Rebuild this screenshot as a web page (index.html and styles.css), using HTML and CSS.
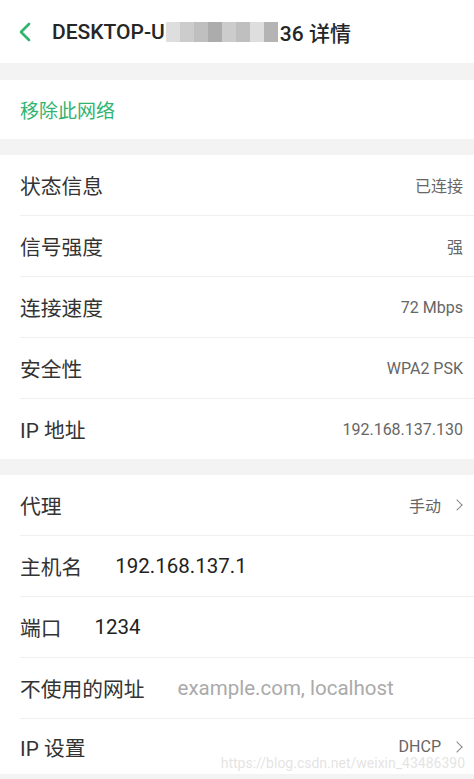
FILE: index.html
```html
<!DOCTYPE html>
<html lang="zh-CN">
<head>
  <meta charset="UTF-8" />
  <meta name="viewport" content="width=device-width, initial-scale=1.0" />
  <title>网络详情</title>
  <link rel="stylesheet" href="styles.css">
</head>
<body>

  <header class="topbar">
    <svg class="back" width="14" height="20" viewBox="0 0 14 20">
      <path d="M11 2 L3 10 L11 18" fill="none" stroke="#2fb46e" stroke-width="2.6" stroke-linecap="round" stroke-linejoin="round"/>
    </svg>
    <h1 class="title">DESKTOP-U<span class="mosaic"><i class="m1"></i><i class="m2"></i><i class="m3"></i><i class="m4"></i><i class="m2"></i><i class="m3"></i><i class="m1"></i><i class="m5"></i></span>36 详情</h1>
  </header>

  <div class="gap"></div>

  <section class="group">
    <div class="row action">移除此网络</div>
  </section>

  <div class="gap"></div>

  <section class="group">
    <div class="row"><span class="label">状态信息</span><span class="value">已连接</span></div>
    <div class="row"><span class="label">信号强度</span><span class="value">强</span></div>
    <div class="row"><span class="label">连接速度</span><span class="value">72 Mbps</span></div>
    <div class="row"><span class="label">安全性</span><span class="value">WPA2 PSK</span></div>
    <div class="row"><span class="label">IP 地址</span><span class="value">192.168.137.130</span></div>
  </section>

  <div class="gap"></div>

  <section class="group">
    <div class="row"><span class="label">代理</span><span class="value">手动<span class="arrow"></span></span></div>
    <div class="row"><span class="label">主机名</span><span class="field">192.168.137.1</span></div>
    <div class="row"><span class="label">端口</span><span class="field">1234</span></div>
    <div class="row"><span class="label">不使用的网址</span><span class="field hint">example.com, localhost</span></div>
    <div class="row last"><span class="label">IP 设置</span><span class="value">DHCP<span class="arrow"></span></span></div>
  </section>

  <div class="watermark">https://blog.csdn.net/weixin_43486390</div>

</body>
</html>
```

FILE: styles.css
```css
body {
  margin: 0;
  background-color: #f3f3f3;
  font-family: Roboto, "Noto Sans CJK SC", sans-serif;
  color: #333;
  position: relative;
  height: 779px;
  overflow: hidden;
}
.topbar {
  height: 63px;
  background-color: #fff;
  display: flex;
  align-items: center;
  padding-left: 18px;
}
.back {
  display: block;
  margin-right: 20px;
}
.title {
  margin: 0;
  font-size: 21px;
  font-weight: 500;
  color: #262626;
  display: flex;
  align-items: center;
}
.mosaic {
  display: inline-flex;
  height: 20px;
  margin: 0 2px 0 1px;
  opacity: 0.85;
}
.mosaic i {
  display: block;
  width: 14px;
  height: 20px;
}
.mosaic .m1 { background-color: #d9d9d9; }
.mosaic .m2 { background-color: #c4c4c4; }
.mosaic .m3 { background-color: #b5b5b5; }
.mosaic .m4 { background-color: #9e9e9e; }
.mosaic .m5 { background-color: #a8a8a8; }
.gap {
  height: 17px;
}
.gap + .group + .gap {
  height: 16px;
}
.group {
  background-color: #fff;
}
.row {
  height: 60px;
  display: flex;
  align-items: center;
  margin-left: 20px;
  padding-right: 11px;
  border-bottom: 1px solid #efefef;
  font-size: 20.75px;
}
.row:last-child {
  border-bottom: none;
}
.row.action {
  height: 59px;
  color: #30b46f;
  font-size: 19px;
}
.row.last {
  height: 55px;
}
.label {
  color: #333;
  margin-right: 33px;
}
.value {
  margin-left: auto;
  font-size: 16px;
  color: #666;
  display: flex;
  align-items: center;
}
.field {
  font-size: 20.5px;
  color: #222;
}
.field.hint {
  color: #aaa;
}
.arrow {
  display: inline-block;
  width: 7px;
  height: 7px;
  border-top: 1.3px solid #888;
  border-right: 1.3px solid #888;
  transform: rotate(45deg);
  margin-left: 12px;
  margin-right: 2px;
}
.watermark {
  position: absolute;
  right: 9px;
  bottom: 8px;
  font-size: 14px;
  color: rgba(200, 200, 200, 0.5);
}
```
